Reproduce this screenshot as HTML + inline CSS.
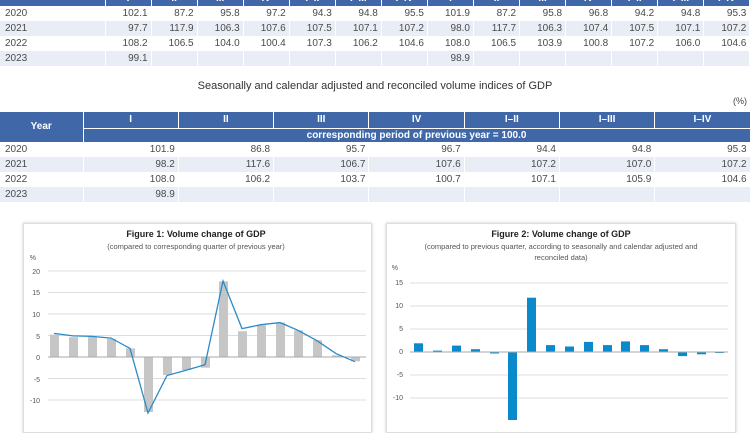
<!DOCTYPE html>
<html><head><meta charset="utf-8">
<style>
*{margin:0;padding:0;box-sizing:border-box}
body{width:750px;height:420px;overflow:hidden;background:#fff;font-family:"Liberation Sans",Arial,sans-serif;color:#444;position:relative}
table{border-collapse:collapse;position:absolute;left:0;table-layout:fixed}
td,th{font-size:10px;white-space:nowrap;overflow:hidden}
td{text-align:right;padding-right:3px;height:15px;border-right:1px solid #fff;color:#4a4a4a}
td:first-child{text-align:left;padding-left:5px}
th{background:#4068a8;color:#fff;font-weight:bold;border-right:1px solid #fff;border-bottom:1px solid #fff}
tr.alt td{background:#e9eef6}
.t{position:absolute;font-size:10px}
.box{position:absolute;border:1px solid #ddd;box-shadow:0 0 3px #ccc;background:#fff}
</style></head><body>
<table style="top:-8px;width:750px">
<colgroup><col style="width:105px"><col span="14" style="width:46.07px"></colgroup>
<tr><th style="height:14px"></th><th>I</th><th>II</th><th>III</th><th>IV</th><th>I–II</th><th>I–III</th><th>I–IV</th><th>I</th><th>II</th><th>III</th><th>IV</th><th>I–II</th><th>I–III</th><th>I–IV</th></tr>
<tr><td>2020</td><td>102.1</td><td>87.2</td><td>95.8</td><td>97.2</td><td>94.3</td><td>94.8</td><td>95.5</td><td>101.9</td><td>87.2</td><td>95.8</td><td>96.8</td><td>94.2</td><td>94.8</td><td>95.3</td></tr>
<tr class="alt"><td>2021</td><td>97.7</td><td>117.9</td><td>106.3</td><td>107.6</td><td>107.5</td><td>107.1</td><td>107.2</td><td>98.0</td><td>117.7</td><td>106.3</td><td>107.4</td><td>107.5</td><td>107.1</td><td>107.2</td></tr>
<tr><td>2022</td><td>108.2</td><td>106.5</td><td>104.0</td><td>100.4</td><td>107.3</td><td>106.2</td><td>104.6</td><td>108.0</td><td>106.5</td><td>103.9</td><td>100.8</td><td>107.2</td><td>106.0</td><td>104.6</td></tr>
<tr class="alt"><td>2023</td><td>99.1</td><td></td><td></td><td></td><td></td><td></td><td></td><td>98.9</td><td></td><td></td><td></td><td></td><td></td><td></td></tr>
</table>
<div class="t" style="top:80px;left:0;width:750px;text-align:center;font-size:11px;color:#333">Seasonally and calendar adjusted and reconciled volume indices of GDP</div>
<div class="t" style="top:96px;right:3px;font-size:9px">(%)</div>
<table style="top:112px;width:750px">
<colgroup><col style="width:83px"><col span="7" style="width:95.3px"></colgroup>
<tr><th rowspan="2" style="height:30px">Year</th><th style="height:16px">I</th><th>II</th><th>III</th><th>IV</th><th>I–II</th><th>I–III</th><th>I–IV</th></tr>
<tr><th colspan="7" style="height:14px">corresponding period of previous year = 100.0</th></tr>
<tr><td>2020</td><td>101.9</td><td>86.8</td><td>95.7</td><td>96.7</td><td>94.4</td><td>94.8</td><td>95.3</td></tr>
<tr class="alt"><td>2021</td><td>98.2</td><td>117.6</td><td>106.7</td><td>107.6</td><td>107.2</td><td>107.0</td><td>107.2</td></tr>
<tr><td>2022</td><td>108.0</td><td>106.2</td><td>103.7</td><td>100.7</td><td>107.1</td><td>105.9</td><td>104.6</td></tr>
<tr class="alt"><td>2023</td><td>98.9</td><td></td><td></td><td></td><td></td><td></td><td></td></tr>
</table>
<div class="box" style="left:23px;top:223px;width:349px;height:210px"></div>
<div class="box" style="left:386px;top:223px;width:350px;height:210px"></div>
<svg width="750" height="420" style="position:absolute;left:0;top:0" font-family="Liberation Sans, Arial, sans-serif">
<g font-size="9" fill="#333" text-anchor="middle">
<text x="196" y="237" font-weight="bold" fill="#222">Figure 1: Volume change of GDP</text>
<text x="196" y="249" font-size="7.5" fill="#555">(compared to corresponding quarter of previous year)</text>
<text x="561" y="237" font-weight="bold" fill="#222">Figure 2: Volume change of GDP</text>
<text x="561" y="249" font-size="7.5" fill="#555">(compared to previous quarter, according to seasonally and calendar adjusted and</text>
<text x="561" y="260" font-size="7.5" fill="#555">reconciled data)</text>
</g>
<g font-size="7" fill="#555" text-anchor="end">
<text x="36" y="260">%</text>
<text x="40" y="274">20</text><text x="40" y="295">15</text><text x="40" y="317">10</text><text x="40" y="339">5</text><text x="40" y="360">0</text><text x="40" y="382">-5</text><text x="40" y="403">-10</text>
<text x="398" y="270">%</text>
<text x="403" y="285">15</text><text x="403" y="308">10</text><text x="403" y="331">5</text><text x="403" y="354">0</text><text x="403" y="377">-5</text><text x="403" y="400">-10</text>
</g>
<g stroke="#ddd" stroke-width="1">
<line x1="48" x2="366" y1="271" y2="271"/><line x1="48" x2="366" y1="292.5" y2="292.5"/><line x1="48" x2="366" y1="314" y2="314"/><line x1="48" x2="366" y1="335.5" y2="335.5"/><line x1="48" x2="366" y1="378.5" y2="378.5"/><line x1="48" x2="366" y1="400" y2="400"/>
<line x1="410" x2="728" y1="283" y2="283"/><line x1="410" x2="728" y1="306" y2="306"/><line x1="410" x2="728" y1="329" y2="329"/><line x1="410" x2="728" y1="375" y2="375"/><line x1="410" x2="728" y1="398" y2="398"/>
</g>
<g fill="#c6c6c6">
<rect x="50" y="334.6" width="9" height="22.4"/><rect x="69" y="337.2" width="9" height="19.8"/><rect x="88" y="336.8" width="9" height="20.2"/><rect x="107" y="338.9" width="9" height="18.1"/><rect x="126" y="348.4" width="9" height="8.6"/><rect x="144" y="357" width="9" height="55"/><rect x="163" y="357" width="9" height="18"/><rect x="182" y="357" width="9" height="13"/><rect x="201" y="357" width="9" height="10.7"/><rect x="219" y="281.3" width="9" height="75.7"/><rect x="238" y="331.2" width="9" height="25.8"/><rect x="257" y="325.2" width="9" height="31.8"/><rect x="276" y="322.6" width="9" height="34.4"/><rect x="294" y="330.3" width="9" height="26.7"/><rect x="313" y="340.2" width="9" height="16.8"/><rect x="332" y="355.3" width="9" height="1.7"/><rect x="351" y="357" width="9" height="4.3"/>
</g>
<line x1="48" x2="366" y1="357" y2="357" stroke="#aaa"/>
<polyline fill="none" stroke="#2b8bc6" stroke-width="1.3" points="54,333.4 73,335.9 92,336.4 111,338.1 130,348.4 148,413 167,375.5 186,370.3 205,364.7 223,281 242,328.6 261,324.7 280,322.6 298,330.3 317,340.7 336,353.6 355,361.7"/>
<g fill="#0a8acb">
<rect x="414" y="343.3" width="9" height="8.7"/><rect x="433" y="350.6" width="9" height="1.4"/><rect x="452" y="345.6" width="9" height="6.4"/><rect x="471" y="349.2" width="9" height="2.8"/><rect x="490" y="352" width="9" height="1.5"/><rect x="508" y="352" width="9" height="70"/><rect x="527" y="297.7" width="9" height="54.3"/><rect x="546" y="345.1" width="9" height="6.9"/><rect x="565" y="346.5" width="9" height="5.5"/><rect x="584" y="341.9" width="9" height="10.1"/><rect x="603" y="345.1" width="9" height="6.9"/><rect x="621" y="341.4" width="9" height="10.6"/><rect x="640" y="345.1" width="9" height="6.9"/><rect x="659" y="349.2" width="9" height="2.8"/><rect x="678" y="352" width="9" height="4.1"/><rect x="697" y="352" width="9" height="2.3"/><rect x="715" y="352" width="9" height="1"/>
</g>
<line x1="410" x2="728" y1="352" y2="352" stroke="#aaa"/>
</svg>
</body></html>
